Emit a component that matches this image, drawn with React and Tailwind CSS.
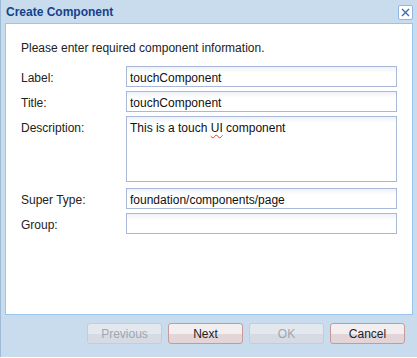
import React from "react";

const FONT = { fontFamily: "Tahoma, 'Liberation Sans', Arial, sans-serif" };

function Field({ label, value, tall, className = "" }) {
  return (
    <div className={`flex items-start ${className}`}>
      <label className="w-[105px] shrink-0 pt-[3px] text-[12px] text-[#222]">{label}</label>
      <div
        className={`w-[271px] border border-[#a9b8d8] bg-gradient-to-b from-[#eef2f8] to-white to-[6px] px-[3px] pt-[2px] text-[12px] text-[#111] ${
          tall ? "h-[66px]" : "h-[21px]"
        }`}
      >
        {value}
      </div>
    </div>
  );
}

function Btn({ children, disabled }) {
  return (
    <button
      disabled={disabled}
      className={`h-[21px] w-[75px] rounded-[3px] border text-[12px] leading-none ${
        disabled
          ? "border-[#c4ccd8] bg-[linear-gradient(#e3e8ef_0,#e3e8ef_55%,#d6dbe3_55%,#d6dbe3_100%)] text-[#a0a6ae]"
          : "border-[#c79a9a] bg-[linear-gradient(#f3eff0_0,#f3eff0_55%,#e3d5d7_55%,#e3d5d7_100%)] text-[#222]"
      }`}
    >
      {children}
    </button>
  );
}

export default function App() {
  return (
    <div className="h-[358px] w-[417px] overflow-hidden bg-white" style={FONT}>
      <div className="h-[357px] border-l border-[#9dbad6] bg-[#c8dcee]">
        <div className="flex h-[23px] items-center justify-between pl-[5px] pr-[4px]">
          <span className="pt-[1px] text-[12px] font-bold text-[#15428b]">Create Component</span>
          <button className="mt-[1px] flex h-[15px] w-[15px] items-center justify-center rounded-[2px] border border-[#8fb5e0] bg-white">
            <svg width="9" height="9" viewBox="0 0 9 9">
              <path d="M1 1L8 8M8 1L1 8" stroke="#3d6cae" strokeWidth="1.4" />
            </svg>
          </button>
        </div>
        <div className="ml-[4px] mr-[4px] h-[292px] border border-[#99c4ee] bg-white px-[15px] pt-[15px]">
          <p className="text-[12px] text-[#222]">Please enter required component information.</p>
          <div className="mt-[9px] flex flex-col gap-[4px]">
            <Field label="Label:" value="touchComponent" />
            <Field label="Title:" value="touchComponent" />
            <Field
              label="Description:"
              tall
              value={
                <span>
                  This is a touch{" "}
                  <span className="underline decoration-wavy decoration-red-500 decoration-[1px] underline-offset-2">UI</span>{" "}
                  component
                </span>
              }
            />
            <Field className="mt-[2px]" label="Super Type:" value="foundation/components/page" />
            <Field label="Group:" value="" />
          </div>
        </div>
        <div className="flex justify-end gap-[6px] pr-[12px] pt-[8px]">
          <Btn disabled>Previous</Btn>
          <Btn>Next</Btn>
          <Btn disabled>OK</Btn>
          <Btn>Cancel</Btn>
        </div>
      </div>
    </div>
  );
}
